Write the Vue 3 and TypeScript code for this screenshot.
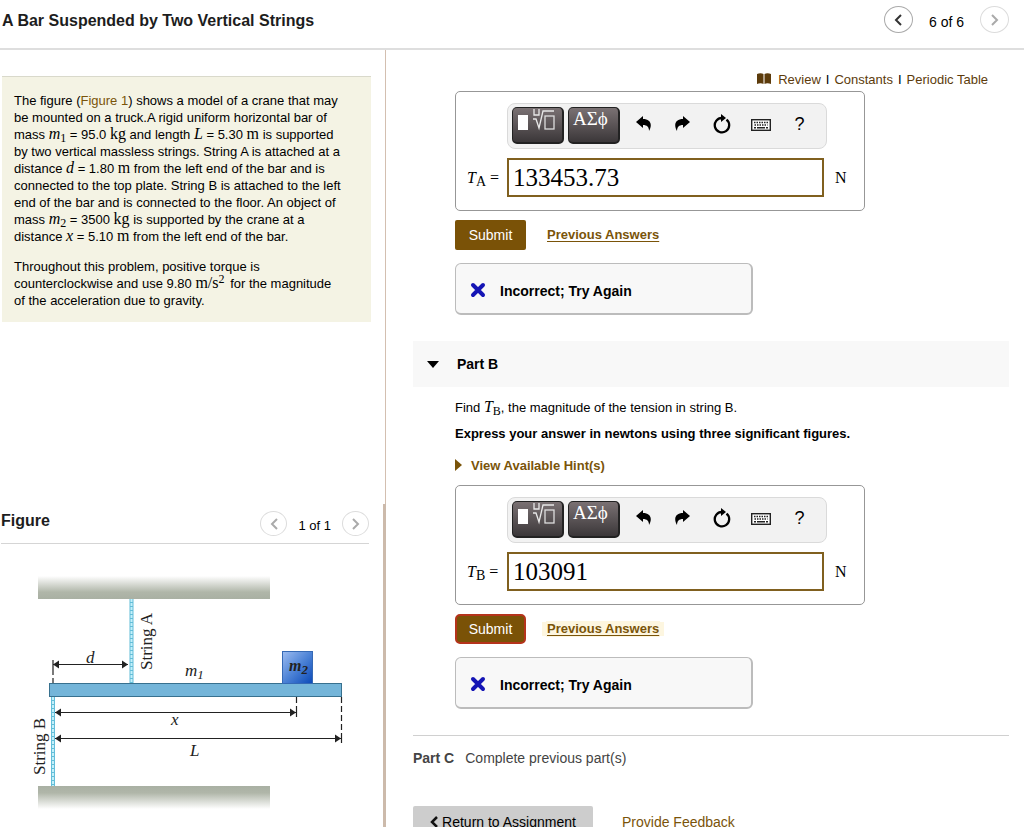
<script setup lang="ts">
import { ref } from 'vue'

interface AnswerPart {
  id: string
  sub: string
  answer: string
  focused: boolean
}

const parts = ref<AnswerPart[]>([
  { id: 'a', sub: 'A', answer: '133453.73', focused: false },
  { id: 'b', sub: 'B', answer: '103091', focused: true },
])
</script>

<template>
  <div class="page">
    <header class="top">
      <h1>A Bar Suspended by Two Vertical Strings</h1>
      <nav class="pager" aria-label="Items">
        <button type="button" class="round dark" aria-label="Previous item">
          <svg viewBox="0 0 10 14" width="10" height="14"><path d="M8 2 3 7l5 5" /></svg>
        </button>
        <span>6 of 6</span>
        <button type="button" class="round" aria-label="Next item">
          <svg viewBox="0 0 10 14" width="10" height="14"><path d="m2 2 5 5-5 5" /></svg>
        </button>
      </nav>
    </header>

    <div class="body">
      <aside class="left">
        <section class="problem">
          <div class="statement">
            <p>
              The figure (<a href="#figure">Figure 1</a>) shows a model of a crane that may<br />
              be mounted on a truck.A rigid uniform horizontal bar of<br />
              mass <i class="m">m</i><sub>1</sub> = 95.0 <span class="m">kg</span> and length <i class="m">L</i> = 5.30 <span class="m">m</span> is supported<br />
              by two vertical massless strings. String A is attached at a<br />
              distance <i class="m">d</i> = 1.80 <span class="m">m</span> from the left end of the bar and is<br />
              connected to the top plate. String B is attached to the left<br />
              end of the bar and is connected to the floor. An object of<br />
              mass <i class="m">m</i><sub>2</sub> = 3500 <span class="m">kg</span> is supported by the crane at a<br />
              distance <i class="m">x</i> = 5.10 <span class="m">m</span> from the left end of the bar.
            </p>
            <p>
              Throughout this problem, positive torque is<br />
              counterclockwise and use 9.80 <span class="m">m/s</span><sup>2</sup> for the magnitude<br />
              of the acceleration due to gravity.
            </p>
          </div>
        </section>

        <section id="figure" class="figure">
          <div class="figure-head">
            <h2>Figure</h2>
            <nav class="pager small" aria-label="Figures">
              <button type="button" class="round" aria-label="Previous figure">
                <svg viewBox="0 0 10 14" width="10" height="14"><path d="M8 2 3 7l5 5" /></svg>
              </button>
              <span>1 of 1</span>
              <button type="button" class="round" aria-label="Next figure">
                <svg viewBox="0 0 10 14" width="10" height="14"><path d="m2 2 5 5-5 5" /></svg>
              </button>
            </nav>
          </div>
          <svg class="diagram" viewBox="0 544 370 283" width="370" height="283" role="img" aria-label="Bar hung from string A and tied down by string B">
            <defs>
              <linearGradient id="plate-top" x1="0" y1="0" x2="0" y2="1">
                <stop offset="0" stop-color="#fff" />
                <stop offset="0.7" stop-color="#b0b6a9" />
                <stop offset="1" stop-color="#a9b0a3" />
              </linearGradient>
              <linearGradient id="plate-bottom" x1="0" y1="1" x2="0" y2="0">
                <stop offset="0" stop-color="#fff" />
                <stop offset="0.7" stop-color="#b0b6a9" />
                <stop offset="1" stop-color="#a9b0a3" />
              </linearGradient>
              <linearGradient id="block" x1="0" y1="0" x2="1" y2="1">
                <stop offset="0" stop-color="#9dbcf0" />
                <stop offset="0.5" stop-color="#4d83d6" />
                <stop offset="1" stop-color="#0a49b8" />
              </linearGradient>
              <marker id="arrow" viewBox="0 0 6 8" markerWidth="5" markerHeight="7" refX="6" refY="4" orient="auto-start-reverse">
                <path d="M0 0 6 4 0 8z" fill="#222" />
              </marker>
            </defs>
            <rect x="38" y="576" width="232" height="23" fill="url(#plate-top)" />
            <rect x="38" y="786" width="232" height="23" fill="url(#plate-bottom)" />
            <g>
              <path d="M131.500 599v85M53 697v89" stroke="#63bdd8" stroke-width="4" />
              <path d="M131.500 599v85M53 697v89" stroke="#c3f0fa" stroke-width="2" stroke-dasharray="3 1" />
            </g>
            <rect x="49.500" y="683.500" width="292" height="13" fill="#74b5d9" stroke="#38718f" />
            <rect x="282.500" y="651.500" width="30" height="32" fill="url(#block)" stroke="#3569b5" />
            <g stroke="#222" stroke-width="1.200" fill="none">
              <path d="M53 664.500h75" marker-start="url(#arrow)" marker-end="url(#arrow)" />
              <path d="M55 712.500h241" marker-start="url(#arrow)" marker-end="url(#arrow)" />
              <path d="M55 738.500h286" marker-start="url(#arrow)" marker-end="url(#arrow)" />
              <path d="M53 660v9M296.500 708v9M341.500 734v9" />
              <path d="M53 669v14M296.500 697v11M341.500 697v37" stroke-dasharray="6 3" />
            </g>
            <g class="labels">
              <text x="86" y="663">d</text>
              <text x="185" y="676">m<tspan class="sub" dy="3">1</tspan></text>
              <text class="heavy" x="289" y="671">m<tspan class="sub" dy="3">2</tspan></text>
              <text x="171" y="725">x</text>
              <text x="190" y="756">L</text>
              <text class="up" transform="translate(152 670) rotate(-90)">String A</text>
              <text class="up" transform="translate(45 775) rotate(-90)">String B</text>
            </g>
          </svg>
        </section>
      </aside>

      <main class="right">
        <div class="links">
          <svg width="14" height="12" viewBox="0 0 14 12" aria-hidden="true">
            <path d="M0 1c2-1 5-1 6.500 0v10C5 10 2 10 0 11zM7.500 1C9 0 12 0 14 1v10c-2-1-5-1-6.500 0z" fill="#5c3b0b" />
          </svg>
          <a href="#review">Review</a><span>I</span><a href="#constants">Constants</a><span>I</span><a href="#table">Periodic Table</a>
        </div>

        <section v-for="part in parts" :key="part.id" class="part">
          <template v-if="part.id === 'b'">
            <h3 class="part-head">
              <svg width="12" height="7" viewBox="0 0 12 7" aria-hidden="true"><path d="M0 0h12L6 7z" /></svg>
              Part B
            </h3>
            <div class="prompt">
              <p>Find <i class="m">T</i><sub>B</sub>, the magnitude of the tension in string B.</p>
              <p class="strong">Express your answer in newtons using three significant figures.</p>
              <button type="button" class="hint">
                <svg width="7" height="12" viewBox="0 0 7 12" aria-hidden="true"><path d="M0 0v12l7-6z" fill="#7a5409" /></svg>
                View Available Hint(s)
              </button>
            </div>
          </template>

          <form class="work" @submit.prevent>
            <div class="answer">
              <div class="toolbar">
                <button type="button" class="tool" aria-label="Templates">
                  <svg width="42" height="26" viewBox="0 0 42 26">
                    <rect x="1" y="7" width="10" height="15" fill="#fff" />
                    <path d="M16 11h3l3 9 4-17h11M17 1v6h5V1" fill="none" stroke="#e8e8e8" stroke-width="1.300" />
                    <rect x="28" y="8" width="9" height="13" fill="none" stroke="#ddd" stroke-width="1.300" />
                  </svg>
                </button>
                <button type="button" class="tool" aria-label="Symbols">ΑΣϕ</button>
                <div class="icons">
                  <button type="button" aria-label="Undo">
                    <svg width="16" height="18" viewBox="0 0 16 18"><path d="M0 7 7 1v3c7 0 10 5 6 12 0-4-2-6-6-6v3z" /></svg>
                  </button>
                  <button type="button" aria-label="Redo">
                    <svg width="16" height="18" viewBox="0 0 16 18"><path d="M15 7 8 1v3C1 4-2 9 2 16c0-4 2-6 6-6v3z" /></svg>
                  </button>
                  <button type="button" aria-label="Reset">
                    <svg width="18" height="20" viewBox="0 0 18 20">
                      <path d="M13.500 5.600A7.200 7.200 0 1 1 9 4" fill="none" stroke="#000" stroke-width="2.300" />
                      <path d="M8 0l5 4-5 4z" />
                    </svg>
                  </button>
                  <button type="button" class="keys" aria-label="Keyboard shortcuts">
                    <svg width="20" height="12" viewBox="0 0 20 12">
                      <rect x=".7" y=".7" width="18.600" height="10.600" fill="#fff" stroke="#222" stroke-width="1.400" />
                      <path d="M3 3.500h14M3.500 6h13" stroke="#222" stroke-width="1.500" stroke-dasharray="1.500 1" />
                      <path d="M3 8.700h2M6 8.700h8M15 8.700h2" stroke="#222" stroke-width="1.500" />
                    </svg>
                  </button>
                  <button type="button" class="help" aria-label="Help">?</button>
                </div>
              </div>
              <div class="entry">
                <label :for="'answer-' + part.id"><i>T</i><sub>{{ part.sub }}</sub> =</label>
                <input :id="'answer-' + part.id" v-model="part.answer" type="text" />
                <span class="unit">N</span>
              </div>
            </div>
            <div class="actions">
              <button type="submit" class="submit" :class="{ focused: part.focused }">Submit</button>
              <a href="#answers" :class="{ lit: part.focused }">Previous Answers</a>
            </div>
            <div class="result">
              <svg width="16" height="16" viewBox="0 0 16 16" aria-hidden="true"><path d="m3 3 10 10M13 3 3 13" stroke="#1515b5" stroke-width="4" stroke-linecap="round" /></svg>
              Incorrect; Try Again
            </div>
          </form>
        </section>

        <section class="next"><strong>Part C</strong><span>Complete previous part(s)</span></section>

        <footer class="foot">
          <button type="button" class="return">
            <svg width="8" height="12" viewBox="0 0 8 12" aria-hidden="true"><path d="M7 1 2 6l5 5" fill="none" stroke="#111" stroke-width="2.500" /></svg>
            Return to Assignment
          </button>
          <a href="#feedback">Provide Feedback</a>
        </footer>
      </main>
    </div>
  </div>
</template>

<style>
body {
  margin: 0;
  background: #fff;
}
</style>

<style scoped>
* {
  box-sizing: border-box;
}
.page {
  height: 100vh;
  overflow: hidden;
  display: flex;
  flex-direction: column;
  font: 13px/17px "Liberation Sans", Arial, sans-serif;
  color: #000;
}
h1, h2, h3, p {
  margin: 0;
}
button {
  font: inherit;
  color: inherit;
  border: 0;
  padding: 0;
  background: none;
  cursor: pointer;
}
svg {
  display: block;
  flex: none;
}
a {
  color: #7a5409;
  text-decoration: none;
}
.top {
  flex: none;
  height: 50px;
  border-bottom: 2px solid #dedede;
  display: flex;
  justify-content: space-between;
  padding: 6px 15px 0 2px;
}
h1 {
  font-size: 16px;
  line-height: 30px;
  color: #1d1d1d;
}
.pager {
  display: flex;
  align-items: flex-start;
  gap: 16px;
  font-size: 14px;
}
.pager span {
  line-height: 33px;
}
.round {
  width: 29px;
  height: 27px;
  border: 1px solid #dcdcdc;
  border-radius: 50%;
  display: flex;
  align-items: center;
  justify-content: center;
}
.round svg {
  fill: none;
  stroke: #aaa;
  stroke-width: 2;
}
.round.dark {
  border-color: #aaa;
}
.round.dark svg {
  stroke: #333;
}
.body {
  flex: 1;
  min-height: 0;
  display: flex;
}
.left {
  flex: none;
  width: 386px;
  display: flex;
  flex-direction: column;
}
.problem {
  flex: 1;
  border-right: 1px solid #d3bfb0;
  padding: 26px 14px 0 2px;
}
.statement {
  background: #f4f3e4;
  border-top: 1px solid #d9d9cb;
  padding: 15px 0 13px 12px;
  display: grid;
  gap: 13px;
  white-space: nowrap;
}
.m, sub, sup {
  font-family: "Liberation Serif", "Times New Roman", serif;
}
.m {
  font-size: 16px;
  line-height: 16px;
}
sub, sup {
  font-size: 12px;
  line-height: 0;
}
sub {
  vertical-align: -3px;
}
sup {
  vertical-align: 5px;
  margin-right: 2px;
}
.figure {
  flex: none;
  height: 323px;
  border-right: 3px solid #ccbaab;
  padding-left: 1px;
}
.figure-head {
  height: 40px;
  margin-right: 14px;
  border-bottom: 1px solid #d5d5d5;
  display: flex;
  justify-content: space-between;
  padding-top: 7px;
}
h2 {
  font-size: 16px;
  line-height: 20px;
  color: #1d1d1d;
}
.small {
  gap: 11px;
  font-size: 13px;
}
.small .round {
  width: 27px;
  height: 25px;
}
.small span {
  line-height: 30px;
}
.diagram {
  margin-left: -1px;
}
.labels {
  font: italic 400 17px "Liberation Serif", serif;
  fill: #222;
}
.labels .sub {
  font-size: 13px;
}
.labels .up {
  font-style: normal;
}
.labels .heavy {
  font-weight: 700;
  font-size: 16px;
}
.right {
  flex: 1;
  min-width: 0;
  padding: 20px 15px 0 27px;
}
.links {
  display: flex;
  justify-content: flex-end;
  align-items: center;
  gap: 5px;
  padding-right: 21px;
  height: 18px;
  margin-bottom: 3px;
}
.links a {
  color: #5c3b0b;
}
.links svg {
  margin-right: 2px;
}
.part-head {
  margin-top: 26px;
  height: 46px;
  padding-left: 14px;
  background: #f8f8f8;
  font-size: 14px;
  display: flex;
  align-items: center;
  gap: 18px;
}
.prompt {
  padding: 12px 0 10px 42px;
  display: grid;
  gap: 9px;
  justify-items: start;
}
.strong {
  font-weight: 700;
}
.hint {
  display: flex;
  align-items: center;
  gap: 9px;
  height: 20px;
  margin-top: 4px;
  color: #7a5409;
  font-weight: 700;
}
.work {
  margin-left: 42px;
}
.answer {
  width: 410px;
  max-width: 100%;
  height: 120px;
  border: 1px solid #979797;
  border-radius: 5px;
  padding: 11px 0 0 11px;
}
.toolbar {
  width: 320px;
  height: 46px;
  margin-left: 40px;
  background: #f2f2f2;
  border: 1px solid #dadada;
  border-radius: 8px;
  padding: 3px 4px;
  display: flex;
  gap: 4px;
}
.tool {
  width: 52px;
  height: 37px;
  border: 1px solid #222;
  border-width: 1px 2px 2px 1px;
  border-radius: 5px;
  background: linear-gradient(#7a7173, #3b3739);
  color: #fff;
  font: 19px/22px "Liberation Serif", serif;
  text-align: left;
  padding-left: 4px;
  display: flex;
}
.icons {
  flex: 1;
  display: grid;
  grid-template-columns: repeat(5, 39px);
  padding-bottom: 4px;
}
.icons button {
  display: flex;
  align-items: center;
  justify-content: center;
}
.icons .keys {
  padding-top: 2px;
}
.help {
  font-size: 18px;
}
.entry {
  display: flex;
  align-items: center;
  margin-top: 9px;
}
.entry label {
  width: 40px;
  flex: none;
  font: 16px/20px "Liberation Serif", serif;
  white-space: nowrap;
}
.entry label sub {
  font-size: 14px;
}
.entry input {
  width: 317px;
  height: 39px;
  border: 2px solid #80601f;
  padding: 0 4px;
  font: 25px "Liberation Serif", serif;
  color: #000;
  background: #fff;
  outline: 0;
}
.unit {
  margin-left: 11px;
  font: 16px/20px "Liberation Serif", serif;
}
.actions {
  display: flex;
  align-items: center;
  gap: 21px;
  margin: 9px 0 13px;
}
.submit {
  width: 71px;
  height: 30px;
  background: #7a5207;
  color: #fff;
  font-size: 14px;
  border-radius: 2px;
}
.submit.focused {
  border: 2px solid #b5331b;
  border-radius: 5px;
}
.actions a {
  font-weight: 700;
  line-height: 14px;
  text-decoration: underline;
  text-underline-offset: 2px;
}
.lit {
  background: #fdf6e0;
  box-shadow: 0 0 0 1px #fdf6e0, 5px 0 0 #fdf6e0, -5px 0 0 #fdf6e0;
}
.result {
  width: 298px;
  max-width: 100%;
  height: 52px;
  border: 2px solid #bcbcbc;
  border-width: 1px 2px 2px 1px;
  border-radius: 6px;
  background: #f8f8f8;
  display: flex;
  align-items: center;
  gap: 14px;
  padding: 6px 0 0 14px;
  font-size: 14px;
  font-weight: 700;
}
.result svg {
  margin-bottom: 4px;
}
.next {
  margin-top: 26px;
  border-top: 1px solid #d0d0d0;
  padding-top: 13px;
  height: 71px;
  display: flex;
  gap: 11px;
  font-size: 14px;
  line-height: 18px;
  color: #444;
}
.foot {
  display: flex;
  gap: 29px;
  font-size: 14px;
  line-height: 32px;
}
.return {
  width: 180px;
  height: 32px;
  background: #cdcdcd;
  border-radius: 2px;
  display: flex;
  align-items: center;
  justify-content: center;
  gap: 4px;
}
</style>
